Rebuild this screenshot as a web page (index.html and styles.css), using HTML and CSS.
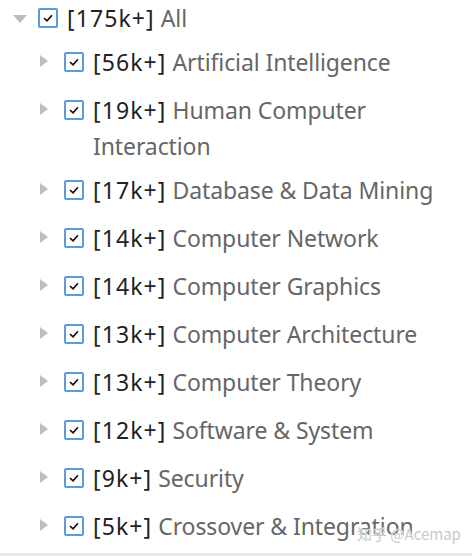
FILE: index.html
```html
<!DOCTYPE html>
<html>
<head>
<meta charset="utf-8">
<link rel="stylesheet" href="styles.css">
</head>
<body>
<div class="panel">
  <div class="row root">
    <span class="caret down"></span>
    <span class="check"><svg viewBox="0 0 10 8" width="10" height="8"><path d="M1 4 L4 6.8 L9 1.2" fill="none" stroke="#111" stroke-width="1.7"/></svg></span>
    <span class="label"><span class="count">[175k+]</span> <span class="name">All</span></span>
  </div>
  <div class="children">
    <div class="row"><span class="caret right"></span><span class="check"><svg viewBox="0 0 10 8" width="10" height="8"><path d="M1 4 L4 6.8 L9 1.2" fill="none" stroke="#111" stroke-width="1.7"/></svg></span><span class="label"><span class="count">[56k+]</span> <span class="name">Artificial Intelligence</span></span></div>
    <div class="row"><span class="caret right"></span><span class="check"><svg viewBox="0 0 10 8" width="10" height="8"><path d="M1 4 L4 6.8 L9 1.2" fill="none" stroke="#111" stroke-width="1.7"/></svg></span><span class="label"><span class="count">[19k+]</span> <span class="name">Human Computer Interaction</span></span></div>
    <div class="row"><span class="caret right"></span><span class="check"><svg viewBox="0 0 10 8" width="10" height="8"><path d="M1 4 L4 6.8 L9 1.2" fill="none" stroke="#111" stroke-width="1.7"/></svg></span><span class="label"><span class="count">[17k+]</span> <span class="name">Database &amp; Data Mining</span></span></div>
    <div class="row"><span class="caret right"></span><span class="check"><svg viewBox="0 0 10 8" width="10" height="8"><path d="M1 4 L4 6.8 L9 1.2" fill="none" stroke="#111" stroke-width="1.7"/></svg></span><span class="label"><span class="count">[14k+]</span> <span class="name">Computer Network</span></span></div>
    <div class="row"><span class="caret right"></span><span class="check"><svg viewBox="0 0 10 8" width="10" height="8"><path d="M1 4 L4 6.8 L9 1.2" fill="none" stroke="#111" stroke-width="1.7"/></svg></span><span class="label"><span class="count">[14k+]</span> <span class="name">Computer Graphics</span></span></div>
    <div class="row"><span class="caret right"></span><span class="check"><svg viewBox="0 0 10 8" width="10" height="8"><path d="M1 4 L4 6.8 L9 1.2" fill="none" stroke="#111" stroke-width="1.7"/></svg></span><span class="label"><span class="count">[13k+]</span> <span class="name">Computer Architecture</span></span></div>
    <div class="row"><span class="caret right"></span><span class="check"><svg viewBox="0 0 10 8" width="10" height="8"><path d="M1 4 L4 6.8 L9 1.2" fill="none" stroke="#111" stroke-width="1.7"/></svg></span><span class="label"><span class="count">[13k+]</span> <span class="name">Computer Theory</span></span></div>
    <div class="row"><span class="caret right"></span><span class="check"><svg viewBox="0 0 10 8" width="10" height="8"><path d="M1 4 L4 6.8 L9 1.2" fill="none" stroke="#111" stroke-width="1.7"/></svg></span><span class="label"><span class="count">[12k+]</span> <span class="name">Software &amp; System</span></span></div>
    <div class="row"><span class="caret right"></span><span class="check"><svg viewBox="0 0 10 8" width="10" height="8"><path d="M1 4 L4 6.8 L9 1.2" fill="none" stroke="#111" stroke-width="1.7"/></svg></span><span class="label"><span class="count">[9k+]</span> <span class="name">Security</span></span></div>
    <div class="row"><span class="caret right"></span><span class="check"><svg viewBox="0 0 10 8" width="10" height="8"><path d="M1 4 L4 6.8 L9 1.2" fill="none" stroke="#111" stroke-width="1.7"/></svg></span><span class="label"><span class="count">[5k+]</span> <span class="name">Crossover &amp; Integration</span></span></div>
  </div>
  <div class="watermark">知乎 @Acemap</div>
</div>
</body>
</html>
```
FILE: styles.css
```css
html, body {
  margin: 0;
  padding: 0;
}
body {
  width: 472px;
  height: 556px;
  background: #e9e9eb;
  overflow: hidden;
  font-family: "Noto Sans", "Open Sans", sans-serif;
}
.panel {
  position: relative;
  height: 553px;
  background: #fff;
  overflow: hidden;
  padding-left: 12px;
  box-sizing: border-box;
}
.row {
  display: flex;
  align-items: flex-start;
  padding: 4px 0;
  min-height: 48px;
  box-sizing: border-box;
}
.row.root {
  padding-top: 0;
  min-height: 0;
}
.children {
  padding-left: 26px;
}
.caret {
  flex: none;
  width: 14px;
  height: 36px;
  position: relative;
}
.caret.down::before {
  content: "";
  position: absolute;
  left: 1px;
  top: 15px;
  border-left: 7px solid transparent;
  border-right: 7px solid transparent;
  border-top: 8px solid #bdbdbd;
}
.caret.right::before {
  content: "";
  position: absolute;
  left: 2px;
  top: 11px;
  border-top: 6.5px solid transparent;
  border-bottom: 6.5px solid transparent;
  border-left: 8px solid #bdbdbd;
}
.check {
  flex: none;
  width: 20px;
  height: 20px;
  margin: 8px 9px 0 12px;
  border: 2px solid #5b9bd8;
  border-radius: 2px;
  box-sizing: border-box;
  background: #fff;
  display: flex;
  align-items: center;
  justify-content: center;
}
.label {
  font-size: 23px;
  line-height: 36px;
  color: #666;
}
.count {
  color: #222;
  letter-spacing: 1.1px;
}
.name {
  letter-spacing: -0.1px;
}
.watermark {
  position: absolute;
  left: 357px;
  top: 524px;
  white-space: nowrap;
  font-family: "Noto Sans CJK SC", "Noto Sans", sans-serif;
  font-size: 15px;
  line-height: 20px;
  color: rgba(195, 195, 195, 0.9);
  text-shadow: 0 0 1px #fff, 0 0 1px #fff;
}
```
